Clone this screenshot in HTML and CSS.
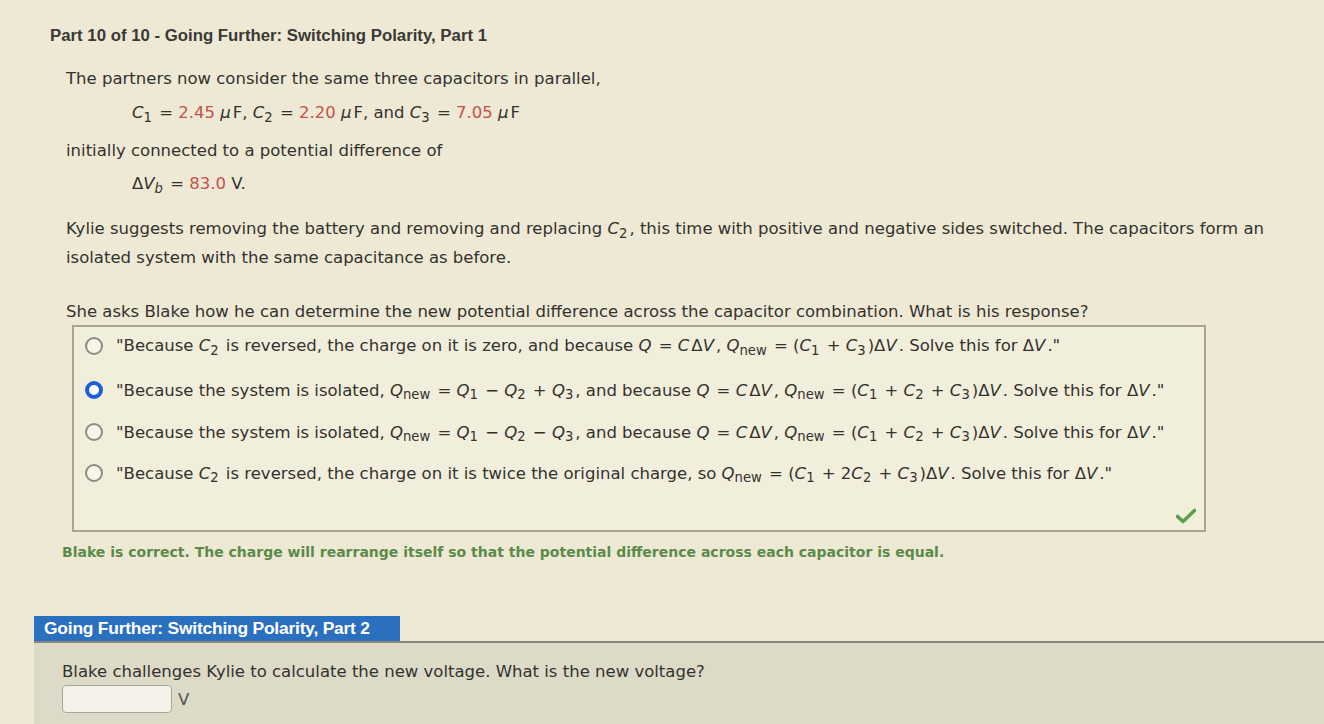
FILE: index.html
```html
<!DOCTYPE html>
<html lang="en">
<head>
<meta charset="utf-8">
<title>Part 10 of 10 - Going Further: Switching Polarity</title>
<link rel="stylesheet" href="styles.css">
</head>
<body>
<main class="page">
  <h1 class="part-title">Part 10 of 10 - Going Further: Switching Polarity, Part 1</h1>

  <section class="problem">
    <p class="text t-intro">The partners now consider the same three capacitors in parallel,</p>
    <p class="eq eq-caps"><i>C</i><sub>1</sub> = <span class="given">2.45</span> <i>μ</i>F, <i>C</i><sub>2</sub> = <span class="given">2.20</span> <i>μ</i>F, and <i>C</i><sub>3</sub> = <span class="given">7.05</span> <i>μ</i>F</p>
    <p class="text t-initial">initially connected to a potential difference of</p>
    <p class="eq eq-volt">Δ<i>V</i><sub><i>b</i></sub> = <span class="given">83.0</span> V.</p>
    <p class="text t-kylie">Kylie suggests removing the battery and removing and replacing <i>C</i><sub>2</sub>, this time with positive and negative sides switched. The capacitors form an isolated system with the same capacitance as before.</p>
    <p class="text t-ask">She asks Blake how he can determine the new potential difference across the capacitor combination. What is his response?</p>

    <div class="choices">
      <label class="choice">
        <span class="radio"></span>
        <span class="choice-text">"Because <i>C</i><sub>2</sub> is reversed, the charge on it is zero, and because <i>Q</i> = <i>C</i>Δ<i>V</i>, <i>Q</i><sub>new</sub> = (<i>C</i><sub>1</sub> + <i>C</i><sub>3</sub>)Δ<i>V</i>. Solve this for Δ<i>V</i>."</span>
      </label>
      <label class="choice">
        <span class="radio is-selected"></span>
        <span class="choice-text">"Because the system is isolated, <i>Q</i><sub>new</sub> = <i>Q</i><sub>1</sub> − <i>Q</i><sub>2</sub> + <i>Q</i><sub>3</sub>, and because <i>Q</i> = <i>C</i>Δ<i>V</i>, <i>Q</i><sub>new</sub> = (<i>C</i><sub>1</sub> + <i>C</i><sub>2</sub> + <i>C</i><sub>3</sub>)Δ<i>V</i>. Solve this for Δ<i>V</i>."</span>
      </label>
      <label class="choice">
        <span class="radio"></span>
        <span class="choice-text">"Because the system is isolated, <i>Q</i><sub>new</sub> = <i>Q</i><sub>1</sub> − <i>Q</i><sub>2</sub> − <i>Q</i><sub>3</sub>, and because <i>Q</i> = <i>C</i>Δ<i>V</i>, <i>Q</i><sub>new</sub> = (<i>C</i><sub>1</sub> + <i>C</i><sub>2</sub> + <i>C</i><sub>3</sub>)Δ<i>V</i>. Solve this for Δ<i>V</i>."</span>
      </label>
      <label class="choice">
        <span class="radio"></span>
        <span class="choice-text">"Because <i>C</i><sub>2</sub> is reversed, the charge on it is twice the original charge, so <i>Q</i><sub>new</sub> = (<i>C</i><sub>1</sub> + 2<i>C</i><sub>2</sub> + <i>C</i><sub>3</sub>)Δ<i>V</i>. Solve this for Δ<i>V</i>."</span>
      </label>
      <svg class="check" viewBox="0 0 20 16" width="20" height="16" aria-hidden="true">
        <path d="M1.5 8.5 L7 13.5 L18.5 2.5" fill="none" stroke="#5aa04a" stroke-width="3.6" stroke-linecap="round" stroke-linejoin="round"/>
      </svg>
    </div>

    <p class="feedback">Blake is correct. The charge will rearrange itself so that the potential difference across each capacitor is equal.</p>
  </section>

  <section class="next-part">
    <h2 class="part-tab">Going Further: Switching Polarity, Part 2</h2>
    <div class="part-panel">
      <p class="text t-challenge">Blake challenges Kylie to calculate the new voltage. What is the new voltage?</p>
      <div class="answer-row">
        <input class="answer" type="text" aria-label="new voltage">
        <span class="unit">V</span>
      </div>
    </div>
  </section>
</main>
</body>
</html>
```

FILE: styles.css
```css
html, body {
  margin: 0;
  padding: 0;
}

body {
  background: #eee9d5;
  color: #33322d;
  font-family: "DejaVu Sans", Verdana, sans-serif;
  font-size: 16.5px;
  width: 1324px;
  height: 724px;
  overflow: hidden;
}

.page {
  padding-top: 25px;
}

.part-title {
  margin: 0 0 0 50px;
  font-family: "Liberation Sans", Arial, sans-serif;
  font-size: 16.8px;
  font-weight: bold;
  color: #3a3935;
  line-height: 22px;
}

.problem {
  padding-left: 66px;
}

.text {
  margin: 0;
  line-height: 29px;
}

.eq {
  margin: 0;
  padding-left: 66px;
  line-height: 29px;
}

.given {
  color: #c4524a;
}

/* math symbols: italic letters, subscripts tucked under the letter */
i {
  font-style: italic;
  padding-right: 2px;
}

sub {
  font-size: 0.8em;
  line-height: 0;
  vertical-align: -0.3em;
  margin-left: -2px;
  padding-right: 2px;
}

sub i {
  padding-right: 0;
}

.t-intro { margin-top: 17px; }
.eq-caps { margin-top: 5px; }
.t-initial { margin-top: 9px; }
.eq-volt { margin-top: 4px; }
.t-kylie { margin-top: 16px; max-width: 1240px; }
.t-ask { margin-top: 25px; }

.choices {
  position: relative;
  margin: -1px 0 0 6px;
  width: 1130px;
  height: 203px;
  box-sizing: content-box;
  border: 2px solid #aaa392;
  background: #f2eedc;
}

.choice {
  display: flex;
  align-items: center;
  gap: 13px;
  height: 42px;
  padding-left: 11px;
}

.choice:first-child {
  height: 37px;
  margin-bottom: 5px;
}

.choice:nth-child(4) {
  height: 40px;
}

.radio {
  flex: none;
  width: 14px;
  height: 14px;
  border: 2px solid #8b8a85;
  border-radius: 50%;
  background: #f7f4e8;
}

.radio.is-selected {
  width: 10px;
  height: 10px;
  border: 4px solid #1d5fd6;
  background: #ffffff;
}

.choice-text {
  white-space: nowrap;
}

.check {
  position: absolute;
  right: 8px;
  bottom: 6px;
}

.feedback {
  margin: 11px 0 0 -4px;
  font-size: 14px;
  font-weight: bold;
  color: #5b8b4b;
  line-height: 18px;
}

.next-part {
  margin-top: 55px;
  padding-left: 34px;
}

.part-tab {
  display: inline-block;
  margin: 0;
  width: 356px;
  height: 25px;
  padding-left: 10px;
  background: #2b6fbf;
  color: #ffffff;
  font-family: "Liberation Sans", Arial, sans-serif;
  font-size: 17.4px;
  font-weight: bold;
  letter-spacing: -0.2px;
  line-height: 25px;
  vertical-align: top;
}

.part-panel {
  border-top: 2px solid #87857b;
  background: #dddac8;
  padding: 15px 0 0 28px;
  height: 70px;
}

.t-challenge {
  line-height: 27px;
}

.answer-row {
  display: flex;
  align-items: center;
  gap: 6px;
}

.answer {
  width: 108px;
  height: 26px;
  padding: 0;
  margin: 0;
  border: 1px solid #a9a79d;
  border-radius: 4px;
  background: #f4f2e8;
}

.unit {
  color: #55544e;
}
```
